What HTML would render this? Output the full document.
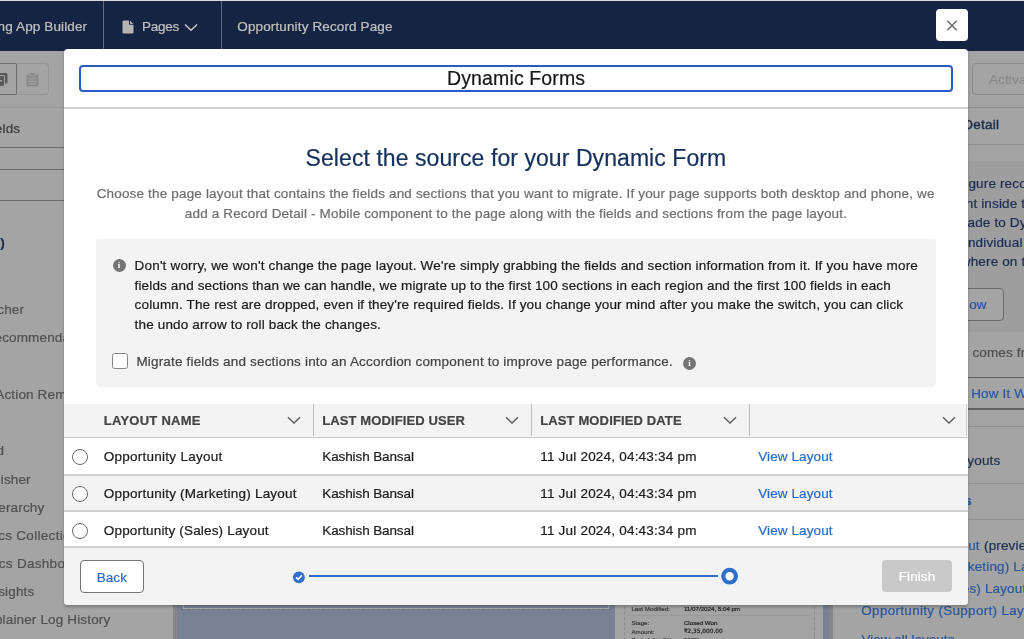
<!DOCTYPE html>
<html>
<head>
<meta charset="utf-8">
<title>Dynamic Forms</title>
<style>
*{box-sizing:border-box;margin:0;padding:0}
html,body{width:1024px;height:639px;overflow:hidden;background:#a4a4a4;font-family:"Liberation Sans",sans-serif;font-size:13.5px;color:#181818}
.abs{position:absolute}
.tx{position:absolute;white-space:nowrap;-webkit-text-stroke:0.22px currentColor}
#texts,#bgtexts{position:absolute;left:0;top:0;width:1024px;height:639px;will-change:transform}
#bgtexts{overflow:hidden}
#hdr{left:0;top:0;width:1024px;height:51px;background:#152442}
#topline{left:0;top:0;width:1024px;height:1px;background:#d9dcdc}
.dv{position:absolute;top:1px;width:1px;height:49px;background:#626b82}
#bg{left:0;top:51px;width:1024px;height:588px;overflow:hidden}
.ln{position:absolute;height:1px}
#modal{left:64px;top:49px;width:904px;height:556px;background:#fff;border-radius:4px;overflow:hidden;box-shadow:0 2px 3px rgba(0,0,0,.25)}
#tin{left:15px;top:16px;width:874px;height:27px;border:2px solid #2a5bc4;border-radius:4px}
#hline{left:0;top:58px;width:904px;height:2px;background:#d2d2d2}
#box{left:32px;top:190px;width:840px;height:148px;background:#f3f3f3;border-radius:4px}
.info{position:absolute;width:13px;height:13px;border-radius:50%;background:#747474}
#cb{left:48px;top:304px;width:16px;height:16px;border:1px solid #858585;border-radius:2.5px;background:#fff}
#thead{left:0;top:355px;width:904px;height:34px;background:#f3f3f3;border-bottom:1px solid #c9c9c9}
.sep{position:absolute;top:0;width:1px;height:32px;background:#bdbdbd}
.row{position:absolute;left:0;width:904px;background:#fff}
.row.alt{background:#f3f3f3}
.rb{position:absolute;left:0;width:904px;height:2px;background:#d0d0d0}
.radio{position:absolute;left:8px;width:16px;height:16px;border:1px solid #6b6b6b;border-radius:50%;background:#fff}
#foot{left:0;top:499px;width:904px;height:57px;background:#f3f3f3}
#back{left:16px;top:12px;width:64px;height:33px;border:1px solid #747474;border-radius:4px;background:#fff}
#finish{left:818px;top:12px;width:70px;height:32px;border-radius:4px;background:#c9c9c9}
#close{left:936px;top:9px;width:32px;height:32px;border-radius:4px;background:#fff}
.info b{display:block;font-family:"Liberation Serif",serif;font-size:9px;line-height:13px;text-align:center;color:#fff;font-weight:bold}
.chev{position:absolute;top:12.3px}
.chev path{stroke:#5c5c5c;stroke-width:1.4;fill:none}

</style>
</head>
<body>
<div class="abs" id="bg">
  <!-- left panel -->
  <div class="ln" style="left:0;top:56px;width:64px;background:#989898"></div>
  <div class="abs" style="left:-16px;top:12px;width:33px;height:32px;border:1px solid #6e6e6e;border-radius:4px 0 0 4px"></div>
  <div class="abs" style="left:16px;top:12px;width:33px;height:32px;border:1px solid #959595;border-left:none;border-radius:0 4px 4px 0"></div>
  <svg class="abs" style="left:-7px;top:21px" width="15" height="15" viewBox="0 0 15 15"><rect x="3.5" y="1" width="11" height="10.5" rx="1.5" fill="#5a5a5a"/><rect x="0" y="3.5" width="11.5" height="11" rx="1.5" fill="#5a5a5a" stroke="#a4a4a4" stroke-width="1"/><rect x="2.5" y="8" width="6.5" height="1.5" fill="#a4a4a4"/></svg>
  <svg class="abs" style="left:26px;top:21px" width="13" height="15" viewBox="0 0 13 15"><rect x="0.5" y="2.5" width="12" height="12" rx="1" fill="#8a8a8a"/><rect x="4" y="0.5" width="5" height="3.5" rx="1" fill="#8a8a8a" stroke="#a4a4a4" stroke-width=".8"/><rect x="2.5" y="6.2" width="8" height="1.2" fill="#a4a4a4"/><rect x="2.5" y="8.7" width="8" height="1.2" fill="#a4a4a4"/><rect x="2.5" y="11.2" width="8" height="1.2" fill="#a4a4a4"/></svg>
  <div class="ln" style="left:0;top:96px;width:64px;background:#6b6b6b"></div>
  <div class="ln" style="left:0;top:118px;width:64px;background:#6b6b6b"></div>
  <div class="ln" style="left:0;top:149px;width:64px;background:#6b6b6b"></div>
  <!-- canvas -->
  <div class="abs" style="left:173px;top:540px;width:4px;height:48px;background:#878787"></div>
  <div class="abs" style="left:177px;top:540px;width:652px;height:48px;background:#798293"></div>
  <div class="abs" style="left:183px;top:540px;width:426px;height:18px;border:1px solid #a6aab1;border-top:none"></div>
  <div class="abs" style="left:182px;top:558px;width:428px;height:1px;border-top:1px dashed #6b7485"></div>
  <div class="abs" style="left:615px;top:540px;width:208px;height:48px;background:#a3a3a3"></div>
  <div class="abs" style="left:624px;top:540px;width:191px;height:60px;border:1px dashed #8a8a8a;border-top:none"></div>
  <div class="ln" style="left:628px;top:564px;width:183px;background:#999"></div>
  <div class="abs" style="left:829px;top:540px;width:4px;height:48px;background:#878787"></div>
  <!-- right panel -->
  <div class="ln" style="left:968px;top:56px;width:56px;background:#8c8c8c"></div>
  <div class="abs" style="left:972px;top:12px;width:80px;height:32px;border:1px solid #8c8c8c;border-radius:4px"></div>
  <div class="ln" style="left:968px;top:93px;width:56px;background:#8e8e8e"></div>
  <div class="abs" style="left:960px;top:110px;width:64px;height:171px;background:#9e9e9e"></div>
  <div class="abs" style="left:900px;top:237px;width:104px;height:33px;border:1px solid #6a6a6a;border-radius:4px;background:#a4a4a4"></div>
  <div class="ln" style="left:968px;top:326px;width:56px;background:#5e5e5e"></div>
  <div class="ln" style="left:968px;top:357px;width:56px;height:2px;background:#626262"></div>
  <div class="ln" style="left:968px;top:375px;width:56px;background:#8f8f8f"></div>
  <div class="ln" style="left:968px;top:432px;width:56px;background:#8f8f8f"></div>
  <div class="ln" style="left:968px;top:468px;width:56px;background:#8f8f8f"></div>
</div>

<div id="bgtexts">
<span class="tx" id="l0" style="right:1003.75px;top:119.27px;font-size:13.5px;line-height:20px;letter-spacing:0.150px;color:#3a3a3a">Fields</span>
<span class="tx" id="l0b" style="right:1019.05px;top:233.07px;font-size:13.5px;line-height:20px;letter-spacing:0.150px;color:#1a2b4b;font-weight:bold">Components (26)</span>
<span class="tx" id="l1" style="right:999.85px;top:300.27px;font-size:13.5px;line-height:20px;letter-spacing:0.150px;color:#505050">Action Launcher</span>
<span class="tx" id="l2" style="left:-77.68px;top:328.27px;font-size:13.5px;line-height:20px;letter-spacing:0.150px;color:#505050">Actions &amp; Recommendations</span>
<span class="tx" id="l3" style="left:-61.43px;top:384.67px;font-size:13.5px;line-height:20px;letter-spacing:0.150px;color:#505050">Dynamic Action Reminder</span>
<span class="tx" id="l4" style="right:1019.85px;top:441.37px;font-size:13.5px;line-height:20px;letter-spacing:0.150px;color:#505050">Chatter Feed</span>
<span class="tx" id="l5" style="right:993.25px;top:469.57px;font-size:13.5px;line-height:20px;letter-spacing:0.150px;color:#505050">Chatter Publisher</span>
<span class="tx" id="l6" style="right:979.65px;top:497.57px;font-size:13.5px;line-height:20px;letter-spacing:0.150px;color:#505050">Contact Hierarchy</span>
<span class="tx" id="l7" style="left:-79.42px;top:525.87px;font-size:13.5px;line-height:20px;letter-spacing:0.300px;color:#505050">CRM Analytics Collection</span>
<span class="tx" id="l8" style="left:-78.82px;top:554.27px;font-size:13.5px;line-height:20px;letter-spacing:0.300px;color:#505050">CRM Analytics Dashboard</span>
<span class="tx" id="l9" style="right:989.65px;top:582.27px;font-size:13.5px;line-height:20px;letter-spacing:0.150px;color:#505050">Einstein Insights</span>
<span class="tx" id="l10" style="right:913.65px;top:610.47px;font-size:13.5px;line-height:20px;letter-spacing:0.150px;color:#505050">Decision Explainer Log History</span>
<span class="tx" id="ra" style="left:988.90px;top:70.07px;font-size:13.5px;line-height:20px;letter-spacing:0.150px;color:#8a8a8a">Activate</span>
<span class="tx" id="rb" style="right:24.85px;top:114.87px;font-size:13.5px;line-height:20px;letter-spacing:0.250px;color:#1a2b4b;-webkit-text-stroke:0.4px #1a2b4b">Record Detail</span>
<span class="tx" id="rc1" style="left:936.18px;top:173.57px;font-size:13.5px;line-height:20px;letter-spacing:0.150px;color:#1b2c52">Configure record</span>
<span class="tx" id="rc2" style="left:909.17px;top:193.57px;font-size:13.5px;line-height:20px;letter-spacing:0.150px;color:#1b2c52">component inside the</span>
<span class="tx" id="rc3" style="left:937.67px;top:212.97px;font-size:13.5px;line-height:20px;letter-spacing:0.150px;color:#1b2c52">Upgrade to Dynamic</span>
<span class="tx" id="rc4" style="left:964.80px;top:232.67px;font-size:13.5px;line-height:20px;letter-spacing:0.150px;color:#1b2c52">individual fields</span>
<span class="tx" id="rc5" style="left:938.59px;top:252.37px;font-size:13.5px;line-height:20px;letter-spacing:0.150px;color:#1b2c52">anywhere on the</span>
<span class="tx" id="rd" style="right:37.25px;top:295.27px;font-size:13.5px;line-height:20px;letter-spacing:0.150px;color:#2b579a">Upgrade Now</span>
<span class="tx" id="re" style="left:942.40px;top:342.77px;font-size:13.5px;line-height:20px;letter-spacing:0.150px;color:#505050">This comes from</span>
<span class="tx" id="rf" style="left:971.20px;top:383.67px;font-size:13.5px;line-height:20px;letter-spacing:0.150px;color:#2b579a">How It Works</span>
<span class="tx" id="rg" style="right:23.65px;top:451.07px;font-size:13.5px;line-height:20px;letter-spacing:0.150px;color:#22324f">Page Layouts</span>
<span class="tx" id="rh" style="right:52.15px;top:491.07px;font-size:13.5px;line-height:20px;letter-spacing:0.150px;color:#2b579a;font-weight:bold">Fields</span>
<span class="tx" id="ri1" style="right:44.25px;top:535.67px;font-size:13.5px;line-height:20px;letter-spacing:0.150px;color:#2b579a">Opportunity Layout</span>
<span class="tx" id="ri1b" style="left:984.00px;top:535.67px;font-size:13.5px;line-height:20px;letter-spacing:0.150px;color:#1b2c52">(previewed)</span>
<span class="tx" id="ri2" style="left:864.13px;top:557.47px;font-size:13.5px;line-height:20px;letter-spacing:0.150px;color:#2b579a">Opportunity (Marketing) Layout</span>
<span class="tx" id="ri3" style="left:861.85px;top:579.07px;font-size:13.5px;line-height:20px;letter-spacing:0.150px;color:#2b579a">Opportunity (Sales) Layout</span>
<span class="tx" id="ri4" style="left:861.30px;top:601.17px;font-size:13.5px;line-height:20px;letter-spacing:0.297px;color:#2b579a">Opportunity (Support) Layout</span>
<span class="tx" id="ri5" style="left:861.40px;top:630.47px;font-size:13.5px;line-height:20px;letter-spacing:0.013px;color:#2b579a">View all layouts</span>
<span class="tx" id="pv1" style="left:631.40px;top:604.40px;font-size:6.2px;line-height:9px;letter-spacing:0.000px;color:#3a3a3a">Last Modified:</span>
<span class="tx" id="pv2" style="left:683.90px;top:604.40px;font-size:6.2px;line-height:9px;letter-spacing:0.000px;color:#222">11/07/2024, 5:04 pm</span>
<span class="tx" id="pv3" style="left:631.40px;top:617.80px;font-size:6.2px;line-height:9px;letter-spacing:0.000px;color:#3a3a3a">Stage:</span>
<span class="tx" id="pv4" style="left:683.90px;top:617.80px;font-size:6.2px;line-height:9px;letter-spacing:0.000px;color:#222">Closed Won</span>
<span class="tx" id="pv5" style="left:631.40px;top:626.80px;font-size:6.2px;line-height:9px;letter-spacing:0.000px;color:#3a3a3a">Amount:</span>
<span class="tx" id="pv6" style="left:683.90px;top:626.80px;font-size:6.2px;line-height:9px;letter-spacing:0.000px;color:#222;font-family:'DejaVu Sans','Liberation Sans',sans-serif;font-size:5.8px">₹2,35,000.00</span>
<span class="tx" id="pv7" style="left:631.40px;top:635.30px;font-size:6.2px;line-height:9px;letter-spacing:0.000px;color:#3a3a3a">Probability (%):</span>
<span class="tx" id="pv8" style="left:683.90px;top:635.30px;font-size:6.2px;line-height:9px;letter-spacing:0.000px;color:#222">100%</span>
</div>
<div class="abs" id="hdr">
  <div class="dv" style="left:103px"></div>
  <div class="dv" style="left:221px"></div>
  <svg class="abs" style="left:122px;top:20px" width="12" height="14" viewBox="0 0 12 14"><path d="M1.5 0.5 H7 V4 a0.8 0.8 0 0 0 0.8 0.8 H11.5 V12.3 a1.2 1.2 0 0 1 -1.2 1.2 H1.7 a1.2 1.2 0 0 1 -1.2 -1.2 V1.7 a1.2 1.2 0 0 1 1 -1.2 Z M8 0.6 L11.4 3.9 H8.3 a0.3 0.3 0 0 1 -0.3 -0.3 Z" fill="#b5b5b5"/></svg>
  <svg class="abs" style="left:184px;top:23px" width="14" height="9" viewBox="0 0 14 9"><path d="M1 1.5 L7 7.3 L13 1.5" stroke="#c8c8c8" stroke-width="1.5" fill="none"/></svg>
</div>
<div class="abs" id="topline"></div>
<div class="abs" id="close">
  <svg width="32" height="32" viewBox="0 0 32 32"><path d="M11.3 11.8 L20.7 21.2 M20.7 11.8 L11.3 21.2" stroke="#707070" stroke-width="1.6" fill="none"/></svg>
</div>
<div class="abs" id="modal">
  <div class="abs" id="tin"></div>
  <div class="abs" id="hline"></div>
  <div class="abs" id="box"></div>
  <div class="info" style="left:48.5px;top:210px"><b>i</b></div>
  <div class="abs" id="cb"></div>
  <div class="info" style="left:619px;top:308px"><b>i</b></div>
  <div class="abs" id="thead">
    <div class="sep" style="left:249px"></div>
    <div class="sep" style="left:467px"></div>
    <div class="sep" style="left:685px"></div>
    <div class="sep" style="left:902px;background:#d0d0d0"></div>
    <svg class="chev" style="left:223px" width="14" height="9" viewBox="0 0 14 9"><path d="M1 1.2 L7 7 L13 1.2"/></svg>
    <svg class="chev" style="left:441px" width="14" height="9" viewBox="0 0 14 9"><path d="M1 1.2 L7 7 L13 1.2"/></svg>
    <svg class="chev" style="left:659px" width="14" height="9" viewBox="0 0 14 9"><path d="M1 1.2 L7 7 L13 1.2"/></svg>
    <svg class="chev" style="left:878px" width="14" height="9" viewBox="0 0 14 9"><path d="M1 1.2 L7 7 L13 1.2"/></svg>
  </div>
  <div class="row" style="top:389px;height:37px"><div class="radio" style="top:11px"></div></div>
  <div class="row alt" style="top:426px;height:36px"><div class="radio" style="top:11px"></div></div>
  <div class="row" style="top:462px;height:37px"><div class="radio" style="top:12px"></div></div>
  <div class="rb" style="top:425px"></div>
  <div class="rb" style="top:461px"></div>
  <div class="rb" style="top:497px"></div>
  <div class="abs" id="foot">
    <div class="abs" id="back"></div>
    <div class="abs" id="finish"></div>
    <div class="abs" style="left:245px;top:27px;width:409px;height:2px;background:#2e6fcd"></div>
    <svg class="abs" style="left:228px;top:22px" width="14" height="14" viewBox="0 0 14 14"><circle cx="6.9" cy="7.3" r="5.9" fill="#2e6fcd"/><path d="M4.1 7.4 L6.2 9.4 L9.9 5.3" stroke="#fff" stroke-width="1.6" fill="none"/></svg>
    <svg class="abs" style="left:655px;top:17px" width="22" height="22" viewBox="0 0 22 22"><circle cx="10.6" cy="11.2" r="6.3" fill="#fff" stroke="#2e6fcd" stroke-width="4.2"/></svg>
  </div>
</div>

<div id="texts">
<span class="tx" id="h1a" style="right:936.77px;top:17.07px;font-size:13.5px;line-height:20px;letter-spacing:0.130px;color:#c0c0c0">Lightning App Builder</span>
<span class="tx" id="h1b" style="left:141.90px;top:17.07px;font-size:13.5px;line-height:20px;letter-spacing:-0.220px;color:#c0c0c0">Pages</span>
<span class="tx" id="h1c" style="left:237.30px;top:17.07px;font-size:13.5px;line-height:20px;letter-spacing:0.130px;color:#c0c0c0">Opportunity Record Page</span>
<span class="tx" id="ttl" style="left:447.00px;top:64.49px;font-size:19.5px;line-height:29px;letter-spacing:0.132px;color:#181818">Dynamic Forms</span>
<span class="tx" id="hd" style="left:305.60px;top:141.18px;font-size:23px;line-height:34px;letter-spacing:0.069px;color:#16325c">Select the source for your Dynamic Form</span>
<span class="tx" id="s1" style="left:96.70px;top:184.17px;font-size:13.5px;line-height:20px;letter-spacing:0.164px;color:#6e6e6e">Choose the page layout that contains the fields and sections that you want to migrate. If your page supports both desktop and phone, we</span>
<span class="tx" id="s2" style="left:184.80px;top:203.87px;font-size:13.5px;line-height:20px;letter-spacing:0.158px;color:#6e6e6e">add a Record Detail - Mobile component to the page along with the fields and sections from the page layout.</span>
<span class="tx" id="p1" style="left:134.60px;top:256.07px;font-size:13.5px;line-height:20px;letter-spacing:0.172px;color:#1c1c1c">Don't worry, we won't change the page layout. We're simply grabbing the fields and section information from it. If you have more</span>
<span class="tx" id="p2" style="left:134.60px;top:275.67px;font-size:13.5px;line-height:20px;letter-spacing:0.140px;color:#1c1c1c">fields and sections than we can handle, we migrate up to the first 100 sections in each region and the first 100 fields in each</span>
<span class="tx" id="p3" style="left:134.60px;top:295.37px;font-size:13.5px;line-height:20px;letter-spacing:0.149px;color:#1c1c1c">column. The rest are dropped, even if they're required fields. If you change your mind after you make the switch, you can click</span>
<span class="tx" id="p4" style="left:134.60px;top:315.07px;font-size:13.5px;line-height:20px;letter-spacing:0.155px;color:#1c1c1c">the undo arrow to roll back the changes.</span>
<span class="tx" id="cbl" style="left:136.40px;top:351.87px;font-size:13.5px;line-height:20px;letter-spacing:0.178px;color:#444">Migrate fields and sections into an Accordion component to improve page performance.</span>
<span class="tx" id="th1" style="left:103.80px;top:411.25px;font-size:13px;line-height:20px;letter-spacing:0.246px;color:#444;font-weight:bold">LAYOUT NAME</span>
<span class="tx" id="th2" style="left:322.30px;top:411.25px;font-size:13px;line-height:20px;letter-spacing:0.103px;color:#444;font-weight:bold">LAST MODIFIED USER</span>
<span class="tx" id="th3" style="left:540.20px;top:411.25px;font-size:13px;line-height:20px;letter-spacing:0.133px;color:#444;font-weight:bold">LAST MODIFIED DATE</span>
<span class="tx" id="r0a" style="left:103.80px;top:447.07px;font-size:13.5px;line-height:20px;letter-spacing:0.254px;color:#1c1c1c">Opportunity Layout</span>
<span class="tx" id="r0b" style="left:322.30px;top:447.07px;font-size:13.5px;line-height:20px;letter-spacing:-0.112px;color:#1c1c1c">Kashish Bansal</span>
<span class="tx" id="r0c" style="left:540.20px;top:447.07px;font-size:13.5px;line-height:20px;letter-spacing:0.210px;color:#1c1c1c">11 Jul 2024, 04:43:34 pm</span>
<span class="tx" id="r0d" style="left:758.20px;top:447.07px;font-size:13.5px;line-height:20px;letter-spacing:0.109px;color:#2a6cc9">View Layout</span>
<span class="tx" id="r1a" style="left:103.80px;top:483.87px;font-size:13.5px;line-height:20px;letter-spacing:0.231px;color:#1c1c1c">Opportunity (Marketing) Layout</span>
<span class="tx" id="r1b" style="left:322.30px;top:483.87px;font-size:13.5px;line-height:20px;letter-spacing:-0.112px;color:#1c1c1c">Kashish Bansal</span>
<span class="tx" id="r1c" style="left:540.20px;top:483.87px;font-size:13.5px;line-height:20px;letter-spacing:0.210px;color:#1c1c1c">11 Jul 2024, 04:43:34 pm</span>
<span class="tx" id="r1d" style="left:758.20px;top:483.87px;font-size:13.5px;line-height:20px;letter-spacing:0.109px;color:#2a6cc9">View Layout</span>
<span class="tx" id="r2a" style="left:103.80px;top:520.67px;font-size:13.5px;line-height:20px;letter-spacing:0.168px;color:#1c1c1c">Opportunity (Sales) Layout</span>
<span class="tx" id="r2b" style="left:322.30px;top:520.67px;font-size:13.5px;line-height:20px;letter-spacing:-0.112px;color:#1c1c1c">Kashish Bansal</span>
<span class="tx" id="r2c" style="left:540.20px;top:520.67px;font-size:13.5px;line-height:20px;letter-spacing:0.210px;color:#1c1c1c">11 Jul 2024, 04:43:34 pm</span>
<span class="tx" id="r2d" style="left:758.20px;top:520.67px;font-size:13.5px;line-height:20px;letter-spacing:0.109px;color:#2a6cc9">View Layout</span>
<span class="tx" id="bk" style="left:96.70px;top:567.67px;font-size:13.5px;line-height:20px;letter-spacing:0.061px;color:#2a6cc9">Back</span>
<span class="tx" id="fn" style="left:898.80px;top:567.27px;font-size:13.5px;line-height:20px;letter-spacing:0.077px;color:#fff">Finish</span>
</div>
</body>
</html>
